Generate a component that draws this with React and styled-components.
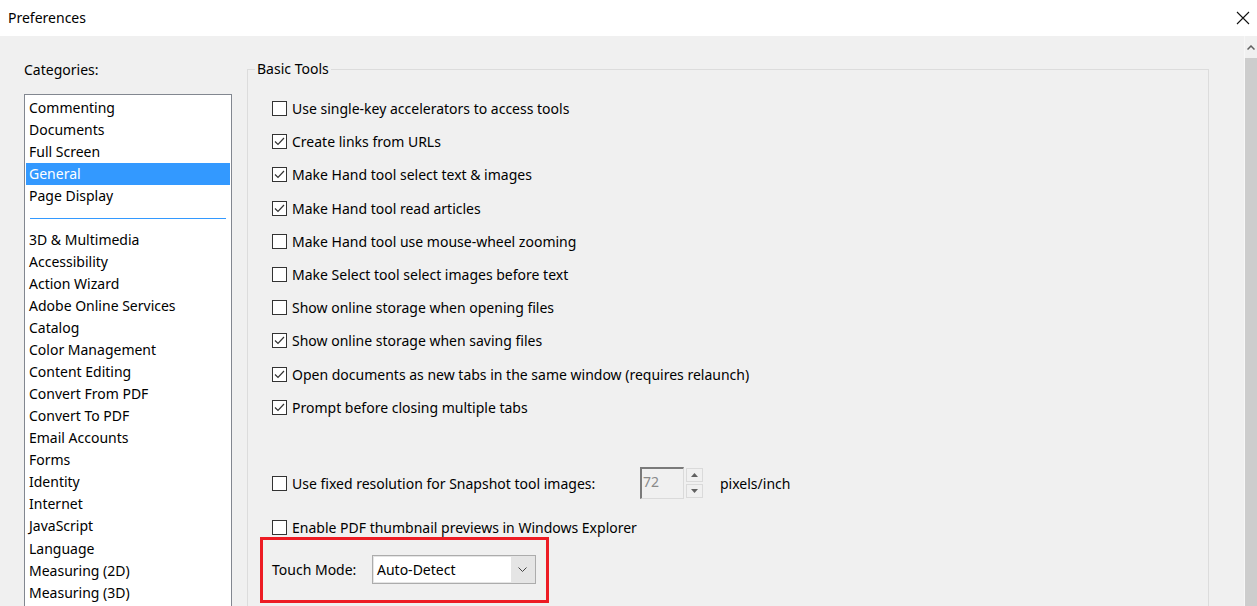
import React from 'react'
import styled, { createGlobalStyle } from 'styled-components'

const GlobalStyle = createGlobalStyle`
    html, body {
        margin: 0;
        padding: 0;
        background: #ffffff;
        font-family: "Noto Sans", "Open Sans", sans-serif;
        font-size: 14px;
        color: #000000;
    }
`

const Window = styled.div`
    width: 1257px;
    height: 606px;
    overflow: hidden;
    display: flex;
    flex-direction: column;
`

const TitleBar = styled.div`
    height: 36px;
    flex: none;
    background: #ffffff;
    display: flex;
    align-items: center;
    justify-content: space-between;
    padding: 0 7px 0 8px;
    box-sizing: border-box;
`

const Title = styled.span`
    font-size: 14px;
    margin-top: -1px;
`

const CloseIcon = styled.svg`
    width: 14px;
    height: 14px;
`

const Body = styled.div`
    flex: 1;
    display: flex;
    background: #f0f0f0;
    overflow: hidden;
`

const Sidebar = styled.div`
    width: 208px;
    flex: none;
    padding: 24px 0 0 24px;
`

const SidebarLabel = styled.div`
    height: 20px;
    line-height: 20px;
    margin-bottom: 14px;
`

const ListBox = styled.div`
    border: 1px solid #828790;
    background: #ffffff;
    padding: 2px 1px 1px;
    height: 600px;
`

const ListItem = styled.div`
    height: ${p => (p.$tall ? 23 : 22)}px;
    line-height: 22px;
    padding-left: 3px;
    white-space: nowrap;
    background: ${p => (p.$selected ? '#3399ff' : 'transparent')};
    color: ${p => (p.$selected ? '#ffffff' : '#000000')};
`

const ListSeparator = styled.div`
    height: 22px;
    display: flex;
    align-items: center;
    padding: 0 4px;

    &::after {
        content: '';
        flex: 1;
        height: 1px;
        background: #3399ff;
    }
`

const Content = styled.div`
    flex: 1;
    padding: 23px 0 0 15px;
`

const GroupBox = styled.fieldset`
    width: 962px;
    height: 640px;
    margin: 0;
    padding: 0 0 0 7px;
    border: 1px solid #dcdcdc;
    box-sizing: border-box;
`

const Legend = styled.legend`
    padding: 0 2px;
    line-height: 20px;
`

const Options = styled.div`
    padding: 13px 0 0 17px;
`

const CheckRow = styled.label`
    display: flex;
    align-items: center;
    height: 33.2px;
    white-space: nowrap;
`

const Box = styled.span`
    width: 13px;
    height: 13px;
    border: 1px solid #333333;
    background: #ffffff;
    margin-right: 5px;
    display: flex;
    align-items: center;
    justify-content: center;
    flex: none;
`

const Spacer = styled.div`
    height: ${p => p.$h}px;
`

const SpinRow = styled(CheckRow)`
    height: 54.8px;
`

const SpinLabel = styled.span`
    width: 348px;
`

const SpinInput = styled.div`
    width: 44px;
    height: 32px;
    border: 1px solid #dadada;
    border-top: 2px solid #7a7a7a;
    border-left: 2px solid #7a7a7a;
    color: #8a8a8a;
    line-height: 26px;
    padding-left: 1px;
    box-sizing: border-box;
`

const SpinButtons = styled.div`
    display: flex;
    flex-direction: column;
    gap: 2px;
    margin-left: 2px;
    margin-right: 17px;
`

const SpinButton = styled.div`
    width: 17px;
    height: 14px;
    border: 1px solid #dadada;
    box-sizing: border-box;
    display: flex;
    align-items: center;
    justify-content: center;
    background: #f0f0f0;
`

const TouchBox = styled.div`
    margin: -7px 0 0 -12px;
    width: 289px;
    height: 66px;
    border: 3px solid #ed1c24;
    box-sizing: border-box;
    display: flex;
    align-items: center;
    padding-left: 9px;
`

const TouchLabel = styled.span`
    width: 100px;
`

const Select = styled.div`
    width: 164px;
    height: 29px;
    border: 1px solid #acacac;
    background: #e5e5e5;
    box-sizing: border-box;
    display: flex;
    align-items: stretch;
    padding: 1px;
`

const SelectValue = styled.div`
    flex: 1;
    background: #ffffff;
    padding-left: 3px;
    line-height: 25px;
`

const SelectArrow = styled.div`
    width: 23px;
    display: flex;
    align-items: center;
    justify-content: center;
`

const Scrollbar = styled.div`
    width: 12px;
    flex: none;
    background: #cdcdcd;
    display: flex;
    flex-direction: column;
    border-left: 1px solid #f7f7f7;
`

const ScrollArrow = styled.div`
    height: 22px;
    background: #f0f0f0;
    display: flex;
    align-items: center;
    justify-content: center;
`

const Check = () => (
    <svg width="11" height="9" viewBox="0 0 11 9">
        <path d="M1 4.5 L4 7.5 L10 1" fill="none" stroke="#333" strokeWidth="1.2" />
    </svg>
)

const Triangle = ({ up }) => (
    <svg width="7" height="4" viewBox="0 0 7 4">
        <path d={up ? 'M0 4 L3.5 0 L7 4 Z' : 'M0 0 L3.5 4 L7 0 Z'} fill="#606060" />
    </svg>
)

const categoriesTop = ['Commenting', 'Documents', 'Full Screen', 'General', 'Page Display']
const categoriesBottom = [
    '3D & Multimedia', 'Accessibility', 'Action Wizard', 'Adobe Online Services', 'Catalog',
    'Color Management', 'Content Editing', 'Convert From PDF', 'Convert To PDF', 'Email Accounts',
    'Forms', 'Identity', 'Internet', 'JavaScript', 'Language', 'Measuring (2D)', 'Measuring (3D)',
]

const options = [
    ['Use single-key accelerators to access tools', false],
    ['Create links from URLs', true],
    ['Make Hand tool select text & images', true],
    ['Make Hand tool read articles', true],
    ['Make Hand tool use mouse-wheel zooming', false],
    ['Make Select tool select images before text', false],
    ['Show online storage when opening files', false],
    ['Show online storage when saving files', true],
    ['Open documents as new tabs in the same window (requires relaunch)', true],
    ['Prompt before closing multiple tabs', true],
]

const App = () => (
    <Window>
        <GlobalStyle />
        <TitleBar>
            <Title>Preferences</Title>
            <CloseIcon viewBox="0 0 14 14">
                <path d="M1 1 L13 13 M13 1 L1 13" stroke="#111" strokeWidth="1.1" />
            </CloseIcon>
        </TitleBar>
        <Body>
            <Sidebar>
                <SidebarLabel>Categories:</SidebarLabel>
                <ListBox>
                    {categoriesTop.map(c => (
                        <ListItem key={c} $selected={c === 'General'}>{c}</ListItem>
                    ))}
                    <ListSeparator />
                    {categoriesBottom.map(c => (
                        <ListItem key={c} $tall={c === 'JavaScript'}>{c}</ListItem>
                    ))}
                </ListBox>
            </Sidebar>
            <Content>
                <GroupBox>
                    <Legend>Basic Tools</Legend>
                    <Options>
                        {options.map(([text, checked]) => (
                            <CheckRow key={text}>
                                <Box>{checked && <Check />}</Box>
                                {text}
                            </CheckRow>
                        ))}
                        <Spacer $h={32} />
                        <SpinRow>
                            <Box />
                            <SpinLabel>Use fixed resolution for Snapshot tool images:</SpinLabel>
                            <SpinInput>72</SpinInput>
                            <SpinButtons>
                                <SpinButton><Triangle up /></SpinButton>
                                <SpinButton><Triangle /></SpinButton>
                            </SpinButtons>
                            pixels/inch
                        </SpinRow>
                        <CheckRow>
                            <Box />
                            Enable PDF thumbnail previews in Windows Explorer
                        </CheckRow>
                        <TouchBox>
                            <TouchLabel>Touch Mode:</TouchLabel>
                            <Select>
                                <SelectValue>Auto-Detect</SelectValue>
                                <SelectArrow>
                                    <svg width="9" height="5" viewBox="0 0 9 5">
                                        <path d="M0.5 0.5 L4.5 4.5 L8.5 0.5" fill="none" stroke="#444" strokeWidth="1" />
                                    </svg>
                                </SelectArrow>
                            </Select>
                        </TouchBox>
                    </Options>
                </GroupBox>
            </Content>
            <Scrollbar>
                <ScrollArrow>
                    <svg width="8" height="5" viewBox="0 0 8 5">
                        <path d="M0.5 4.5 L4 1 L7.5 4.5" fill="none" stroke="#606060" strokeWidth="1.5" />
                    </svg>
                </ScrollArrow>
            </Scrollbar>
        </Body>
    </Window>
)

export default App
